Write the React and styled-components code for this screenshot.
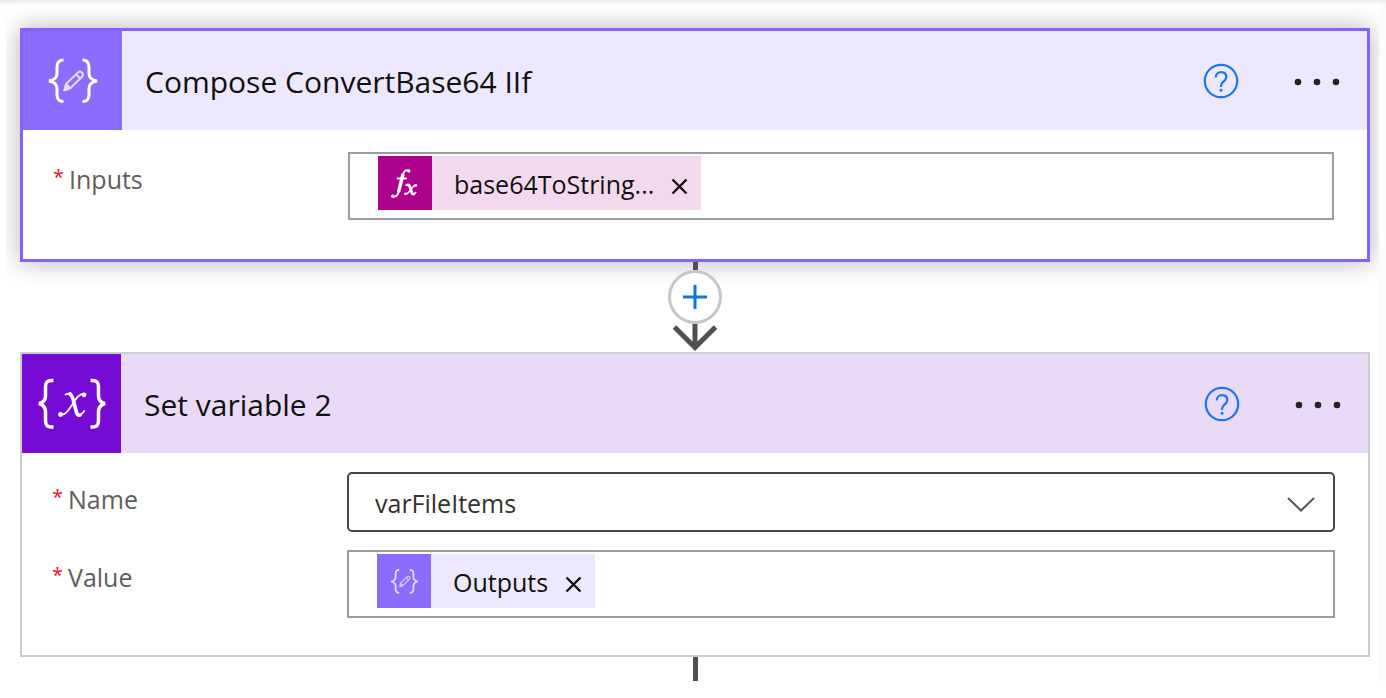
import React from "react";
import styled, { createGlobalStyle } from "styled-components";

const GlobalStyle = createGlobalStyle`
  *, *::before, *::after { box-sizing: border-box; }
  body {
    margin: 0;
    background: #fff;
    font-family: "Open Sans", "Noto Sans", sans-serif;
    color: #111;
  }
  button, input, select { font: inherit; color: inherit; }
`;

const Page = styled.div`
  display: grid;
  grid-template-columns: 6px minmax(0, 1fr) 7px;
`;

const TopEdge = styled.div`
  grid-column: 1 / -1;
  height: 4px;
  background: linear-gradient(#e9e9e9, #fafafa);
`;

const Gutter = styled.div`
  background: ${(p) => (p.$tinted ? "#fbfbfb" : "#fff")};
`;

const Flow = styled.main`
  display: flex;
  flex-direction: column;
  padding: 24px 9px 0 14px;
  overflow: hidden;
`;

const Card = styled.section`
  background: #fff;
  border: ${(p) => (p.$selected ? "3px solid #8661ff" : "2px solid #cdcdcd")};
  box-shadow: ${(p) => (p.$selected ? "0 0 24px rgba(0, 0, 0, 0.3)" : "none")};
`;

const CardHeader = styled.header`
  display: flex;
  align-items: center;
  height: 99px;
  padding-right: 26px;
  background: ${(p) => p.$tone};
`;

const CardTile = styled.div`
  display: grid;
  place-items: center;
  flex: none;
  width: 99px;
  height: 99px;
  background: ${(p) => p.$tone};
`;

const Title = styled.h2`
  flex: 1;
  margin: 0;
  padding: 3px 0 0 23px;
  font-size: 30px;
  line-height: 40px;
  font-weight: 400;
`;

const IconButton = styled.button`
  display: grid;
  place-items: center;
  padding: 0;
  border: 0;
  background: none;
  cursor: pointer;
`;

const Actions = styled.div`
  display: flex;
  align-items: center;
  gap: 54px;
`;

const CardBody = styled.div`
  display: flex;
  flex-direction: column;
  gap: 18px;
  padding: ${(p) => (p.$roomy ? "22px 33px 39px 30px" : "19px 33px 37px 30px")};
`;

const FieldRow = styled.div`
  display: grid;
  grid-template-columns: 295px minmax(0, 1fr);
  align-items: start;
`;

const Label = styled.label`
  display: flex;
  gap: 5px;
  padding-top: 9px;
  font-size: 25px;
  line-height: 36px;
  color: #605e5c;
`;

const Required = styled.span`
  color: #e8112d;
  font-size: 20px;
  line-height: 32px;
`;

const TokenField = styled.div`
  display: flex;
  align-items: flex-start;
  height: 68px;
  padding: 2px 28px;
  border: 2px solid #9c9c9c;
  background: #fff;
`;

const TokenInput = styled.input`
  flex: 1;
  min-width: 0;
  height: 54px;
  border: 0;
  outline: 0;
  background: none;
  font-size: 25px;
`;

const TokenBox = styled.div`
  display: flex;
  align-items: center;
  height: 54px;
  padding-right: 13px;
  background: ${(p) => p.$tone};
`;

const TokenTile = styled.div`
  display: grid;
  place-items: center;
  width: 54px;
  height: 54px;
  background: ${(p) => p.$tone};
`;

const TokenText = styled.span`
  padding: 1px 17px 0 22px;
  font-size: 25px;
  line-height: 36px;
`;

const RemoveButton = styled(IconButton)`
  padding-top: 6px;
`;

const SelectWrap = styled.div`
  display: grid;
  align-items: center;
  > * { grid-area: 1 / 1; }
  > svg {
    justify-self: end;
    margin: 6px 20px 0 0;
    pointer-events: none;
  }
`;

const Select = styled.select`
  appearance: none;
  width: 100%;
  height: 60px;
  padding: 2px 60px 0 26px;
  border: 2px solid #484644;
  border-radius: 5px;
  background: #fff;
  color: #323130;
  font-size: 25px;
`;

const Connector = styled.div`
  display: flex;
  flex-direction: column;
  align-items: center;
`;

const Stem = styled.div`
  width: 5px;
  height: ${(p) => p.$length}px;
  background: #505050;
`;

const AddButton = styled(IconButton)`
  width: 54px;
  height: 54px;
  border: 3px solid #c8c6c4;
  border-radius: 50%;
  background: #fff;
`;

const ComposeIcon = ({ size, opacity = 1 }) => (
  <svg width={size} height={size} viewBox="0 0 52 52" fill="none" stroke="#fff" strokeWidth="3" opacity={opacity} aria-hidden="true">
    <path d="M16.500 5c-5 0-6.500 2.500-6.500 7v6.500c0 4-2.500 6.500-8 7.500c5.500 1 8 3.500 8 7.500v6c0 4.500 1.500 7 6.500 7" />
    <path d="M35.500 5c5 0 6.500 2.500 6.500 7v6.500c0 4 2.500 6.500 8 7.500c-5.500 1-8 3.500-8 7.500v6c0 4.500-1.500 7-6.500 7" />
    <g stroke="#e4dbff" strokeWidth="2" strokeLinejoin="round">
      <path d="M17.500 35l1.500-6L31 17.500c2.500-2.500 6.500 1 4.200 4L23.500 33Z" />
      <path d="M29 19.500l4.200 4M19 29l4.500 4" />
      <path strokeWidth="2.500" d="M17.500 35l2-3.500l2 2Z" />
    </g>
  </svg>
);

const VariableIcon = () => (
  <svg width="76" height="56" viewBox="0 0 76 56" fill="none" stroke="#fff" strokeWidth="3.500" aria-hidden="true">
    <path d="M19.500 4.500h-2c-4.500 0-6 2-6 6.500v9c0 4-1.500 6.500-6.500 7.500c5 1.500 6.500 4 6.500 8v9c0 4.500 1.500 6.500 6 6.500h2" />
    <path d="M56.500 4.500h2c4.500 0 6 2 6 6.500v9c0 4 1.500 6.500 6.500 7.500c-5 1.500-6.500 4-6.500 8v9c0 4.500-1.500 6.500-6 6.500h-2" />
    <g strokeLinecap="round" strokeLinejoin="round">
      <path strokeWidth="1.800" d="M31.500 18.500c2-.5 3.500-1 5-1.500" />
      <path strokeWidth="3.600" d="M36 17.800c2.500 2 3 5 3.800 8.200l2.200 8.500c.8 3.500 1.800 5.500 4 4.500" />
      <path strokeWidth="1.800" d="M46 39c1.800-.8 3-2.200 4.200-4" />
      <path strokeWidth="1.800" d="M26.500 38.500c4.500 1 7.500-3.500 11.500-9.500c4-6 7-11.500 12-11" />
    </g>
    <circle cx="26.500" cy="38.500" r="2.400" fill="#fff" stroke="none" />
    <circle cx="50" cy="18.800" r="2.400" fill="#fff" stroke="none" />
  </svg>
);

const FxIcon = () => (
  <svg width="54" height="54" viewBox="0 0 54 54" fill="none" stroke="#fff" strokeLinecap="round" aria-hidden="true">
    <path strokeWidth="1.800" d="M15 40.500c3.500 1 5-2 6-6M25 18.500c1-3.500 3-5 6-4" />
    <path strokeWidth="3.400" d="M20.800 35L24.800 19" />
    <path strokeWidth="1.800" d="M19.500 22.500h8.500" />
    <circle cx="14.800" cy="40.300" r="1.700" fill="#fff" stroke="none" />
    <circle cx="30.800" cy="15" r="1.700" fill="#fff" stroke="none" />
    <path strokeWidth="2.800" d="M30 29c1.500 0 2 1.500 2.300 2.800l1.200 4c.4 1.500 1 2.500 2.300 2.200" />
    <path strokeWidth="1.600" d="M28 29.200l2-.5M36 38l1.800-1.500M27.500 38c2.500.5 4-2.500 5.500-4.500s2.500-4.500 4.800-4.500" />
    <circle cx="27.500" cy="37.800" r="1.400" fill="#fff" stroke="none" />
    <circle cx="37.800" cy="29.500" r="1.400" fill="#fff" stroke="none" />
  </svg>
);

const HelpIcon = () => (
  <svg width="36" height="36" viewBox="0 0 36 36" fill="none" stroke="#1a75ff" strokeWidth="2.200" aria-hidden="true">
    <circle cx="18" cy="18" r="16.200" />
    <path d="M12.700 14.500c0-3.200 2-5.300 5.300-5.300s5.300 2 5.300 4.900c0 4.200-5.300 4.400-5.300 8.900v1" />
    <circle cx="18" cy="27.300" r="1.500" fill="#1a75ff" stroke="none" />
  </svg>
);

const MoreIcon = () => (
  <svg width="48" height="12" viewBox="0 0 48 12" fill="#252423" aria-hidden="true">
    <circle cx="5" cy="7" r="3.300" />
    <circle cx="24" cy="7" r="3.300" />
    <circle cx="43" cy="7" r="3.300" />
  </svg>
);

const CloseIcon = () => (
  <svg width="17" height="17" viewBox="0 0 17 17" stroke="#111" strokeWidth="2.400" aria-hidden="true">
    <path d="M1.500 1.500l14 14M15.500 1.500l-14 14" />
  </svg>
);

const ChevronIcon = () => (
  <svg width="28" height="16" viewBox="0 0 28 16" fill="none" stroke="#555" strokeWidth="2" aria-hidden="true">
    <path d="M1 1l13 12.500L27 1" />
  </svg>
);

const PlusIcon = () => (
  <svg width="24" height="24" viewBox="0 0 24 24" stroke="#0a78d4" strokeWidth="3" aria-hidden="true">
    <path d="M12 0v24M0 12h24" />
  </svg>
);

const ArrowIcon = () => (
  <svg width="46" height="28" viewBox="0 0 46 28" fill="none" stroke="#505050" strokeWidth="5" aria-hidden="true">
    <path d="M23 0v24M2.500 3L23 23.500L43.500 3" />
  </svg>
);

function Token({ icon, tone, tileTone, children }) {
  return (
    <TokenBox $tone={tone}>
      <TokenTile $tone={tileTone}>{icon}</TokenTile>
      <TokenText>{children}</TokenText>
      <RemoveButton type="button" aria-label="Remove">
        <CloseIcon />
      </RemoveButton>
    </TokenBox>
  );
}

function Header({ title, icon, tone, tileTone }) {
  return (
    <CardHeader $tone={tone}>
      <CardTile $tone={tileTone}>{icon}</CardTile>
      <Title>{title}</Title>
      <Actions>
        <IconButton type="button" aria-label="Help">
          <HelpIcon />
        </IconButton>
        <IconButton type="button" aria-label="More commands">
          <MoreIcon />
        </IconButton>
      </Actions>
    </CardHeader>
  );
}

function Field({ id, label, children }) {
  return (
    <FieldRow>
      <Label htmlFor={id}>
        <Required>*</Required>
        {label}
      </Label>
      {children}
    </FieldRow>
  );
}

export default function App() {
  return (
    <>
      <GlobalStyle />
      <Page>
        <TopEdge />
        <Gutter />
        <Flow>
          <Card $selected>
            <Header
              title="Compose ConvertBase64 IIf"
              icon={<ComposeIcon size={52} />}
              tone="#ede7ff"
              tileTone="#8c6cff"
            />
            <CardBody $roomy>
              <Field id="inputs" label="Inputs">
                <TokenField>
                  <Token icon={<FxIcon />} tone="#f2d9ed" tileTone="#ad008c">
                    base64ToString...
                  </Token>
                  <TokenInput id="inputs" type="text" />
                </TokenField>
              </Field>
            </CardBody>
          </Card>

          <Connector>
            <Stem $length={8} />
            <AddButton type="button" aria-label="Insert a new step">
              <PlusIcon />
            </AddButton>
            <ArrowIcon />
          </Connector>

          <Card>
            <Header
              title="Set variable 2"
              icon={<VariableIcon />}
              tone="#ebdaf7"
              tileTone="#770bd6"
            />
            <CardBody>
              <Field id="name" label="Name">
                <SelectWrap>
                  <Select id="name" defaultValue="varFileItems">
                    <option>varFileItems</option>
                  </Select>
                  <ChevronIcon />
                </SelectWrap>
              </Field>
              <Field id="value" label="Value">
                <TokenField>
                  <Token
                    icon={<ComposeIcon size={29} opacity={0.8} />}
                    tone="#ede7ff"
                    tileTone="#8c6cff"
                  >
                    Outputs
                  </Token>
                  <TokenInput id="value" type="text" />
                </TokenField>
              </Field>
            </CardBody>
          </Card>

          <Connector>
            <Stem $length={24} />
          </Connector>
        </Flow>
        <Gutter $tinted />
      </Page>
    </>
  );
}
